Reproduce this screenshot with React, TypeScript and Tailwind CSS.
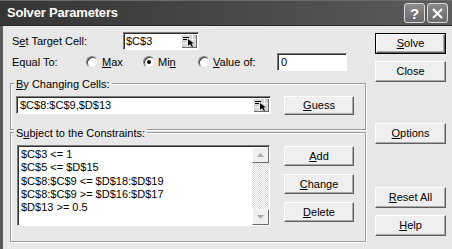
import type { ReactNode } from "react";

const font = "font-['Liberation_Sans',Arial,sans-serif]";

function Btn({
  children,
  className = "",
  isDefault = false,
}: {
  children: ReactNode;
  className?: string;
  isDefault?: boolean;
}) {
  return (
    <div className={`${isDefault ? "border border-black" : ""} ${className}`}>
      <div className="h-full w-full flex items-center justify-center text-[11px] text-black bg-[#efefef] border border-t-white border-l-white border-r-[#5f5f5f] border-b-[#5f5f5f] shadow-[inset_-1px_-1px_0_#a9a9a9]">
        {children}
      </div>
    </div>
  );
}

function RefIcon() {
  return (
    <svg width="15" height="13" viewBox="0 0 15 13" className="shrink-0">
      <rect x="0" y="0" width="15" height="13" fill="#d2d2d2" />
      <path d="M0 4.5H15M0 8.5H15M5.5 0V13M10.5 0V13" stroke="#f2f2f2" strokeWidth="1" />
      <path d="M1 2.5H7M1 4.5H5" stroke="#000" strokeWidth="1" />
      <path d="M6 4 L6 11 L8 9 L10 12 L11 11.5 L9.5 8.5 L12 8.5 Z" fill="#000" />
      <path d="M0 12.5H15M14.5 0V13" stroke="#6a6a6a" strokeWidth="1" />
    </svg>
  );
}

function Radio({ checked = false }: { checked?: boolean }) {
  return (
    <span className="w-[12px] h-[12px] rounded-full bg-white border border-t-[#7d7d7d] border-l-[#7d7d7d] border-r-[#e4e4e4] border-b-[#e4e4e4] shadow-[inset_1px_1px_0_#3f3f3f] flex items-center justify-center shrink-0">
      {checked && <span className="w-[4px] h-[4px] rounded-full bg-black" />}
    </span>
  );
}

const sunken =
  "bg-white border border-t-[#7d7d7d] border-l-[#7d7d7d] border-r-white border-b-white shadow-[inset_1px_1px_0_#2e2e2e]";

const etched =
  "border border-[#9b9b9b] shadow-[inset_1px_1px_0_#fff,1px_1px_0_#fff]";

const constraints = [
  "$C$3 <= 1",
  "$C$5 <= $D$15",
  "$C$8:$C$9 <= $D$18:$D$19",
  "$C$8:$C$9 >= $D$16:$D$17",
  "$D$13 >= 0.5",
];

export default function App() {
  return (
    <div className={`w-[452px] h-[249px] overflow-hidden bg-[#e8e8e8] flex flex-col ${font}`}>
      {/* title bar */}
      <div className="h-[26px] shrink-0 flex items-center justify-between bg-gradient-to-r from-[#353535] via-[#474747] to-[#5c5c5c] shadow-[inset_0_1px_0_#6a6a6a,inset_0_-1px_0_#2a2a2a]">
        <span className="pl-[7px] text-[13px] font-bold text-white tracking-[-0.2px]">
          Solver Parameters
        </span>
        <div className="flex gap-[2px] pr-[4px]">
          <div className="w-[21px] h-[20px] rounded-[3px] border border-[#dcdcdc] bg-gradient-to-b from-[#8c8c8c] to-[#6a6a6a] flex items-center justify-center text-white font-bold text-[15px] leading-none">
            ?
          </div>
          <div className="w-[21px] h-[20px] rounded-[3px] border border-[#dcdcdc] bg-gradient-to-b from-[#8a8a8a] to-[#6a6a6a] flex items-center justify-center">
            <svg width="13" height="13" viewBox="0 0 13 13">
              <path d="M2 2L11 11M11 2L2 11" stroke="#fff" strokeWidth="2.2" />
            </svg>
          </div>
        </div>
      </div>

      {/* body */}
      <div className="flex-1 flex border-l-[3px] border-[#5a5a5a] text-[11px] text-black">
        {/* left column */}
        <div className="w-[362px] pl-[7px] pt-[6px] flex flex-col">
          <div className="h-[18px] flex items-center">
            <span className="w-[113px] pl-[2px]">
              S<span className="underline">e</span>t Target Cell:
            </span>
            <div className={`w-[76px] h-[18px] ${sunken} flex items-center justify-between pl-[2px] pr-[1px]`}>
              <span>$C$3</span>
              <RefIcon />
            </div>
          </div>

          <div className="h-[18px] mt-[3px] flex items-center">
            <span className="w-[76px] pl-[2px]">Equal To:</span>
            <div className="w-[57px] flex items-center gap-[4px]">
              <Radio />
              <span>
                <span className="underline">M</span>ax
              </span>
            </div>
            <div className="w-[55px] flex items-center gap-[3px]">
              <Radio checked />
              <span>
                Mi<span className="underline">n</span>
              </span>
            </div>
            <div className="w-[79px] flex items-center gap-[3px]">
              <Radio />
              <span>
                <span className="underline">V</span>alue of:
              </span>
            </div>
            <div className={`w-[70px] h-[18px] ${sunken} flex items-center pl-[3px]`}>0</div>
          </div>

          {/* By Changing Cells */}
          <div className={`relative mt-[12px] h-[47px] w-[356px] ${etched} pl-[5px] pt-[12px] flex items-start`}>
            <span className="absolute left-[3px] top-[-8px] px-[2px] bg-[#e8e8e8]">
              <span className="underline">B</span>y Changing Cells:
            </span>
            <div className={`w-[255px] h-[18px] ${sunken} flex items-center justify-between pl-[3px] pr-[1px]`}>
              <span>$C$8:$C$9,$D$13</span>
              <RefIcon />
            </div>
            <Btn className="ml-[13px] w-[70px] h-[19px]">
              <span>
                <span className="underline">G</span>uess
              </span>
            </Btn>
          </div>

          {/* Subject to the Constraints */}
          <div className={`relative mt-[2px] h-[110px] w-[356px] ${etched} pl-[6px] pt-[12px] flex items-start`}>
            <span className="absolute left-[3px] top-[-8px] px-[2px] bg-[#e8e8e8]">
              S<span className="underline">u</span>bject to the Constraints:
            </span>
            <div className={`w-[253px] h-[81px] ${sunken} flex`}>
              <div className="flex-1 pl-[3px] pt-[2px] leading-[13.3px] whitespace-pre">
                {constraints.map((c) => (
                  <div key={c}>{c}</div>
                ))}
              </div>
              <div className="w-[17px] flex flex-col bg-[repeating-conic-gradient(#ffffff_0_25%,#d9d9d9_0_50%)] bg-[length:2px_2px] mt-[1px] mr-[0px]">
                <div className="h-[16px] bg-[#efefef] border border-t-white border-l-white border-r-[#6b6b6b] border-b-[#6b6b6b] flex items-center justify-center">
                  <svg width="7" height="4" viewBox="0 0 7 4">
                    <path d="M3.5 0L7 4H0Z" fill="#a8a8a8" />
                  </svg>
                </div>
                <div className="flex-1" />
                <div className="h-[16px] bg-[#efefef] border border-t-white border-l-white border-r-[#6b6b6b] border-b-[#6b6b6b] flex items-center justify-center">
                  <svg width="7" height="4" viewBox="0 0 7 4">
                    <path d="M0 0H7L3.5 4Z" fill="#a8a8a8" />
                  </svg>
                </div>
              </div>
            </div>
            <div className="ml-[14px] mt-[1px] flex flex-col gap-[8px]">
              <Btn className="w-[70px] h-[20px]">
                <span>
                  <span className="underline">A</span>dd
                </span>
              </Btn>
              <Btn className="w-[70px] h-[20px]">
                <span>
                  <span className="underline">C</span>hange
                </span>
              </Btn>
              <Btn className="w-[70px] h-[20px]">
                <span>
                  <span className="underline">D</span>elete
                </span>
              </Btn>
            </div>
          </div>
        </div>

        {/* right column */}
        <div className="ml-[10px] pt-[7px] w-[71px] flex flex-col">
          <Btn isDefault className="h-[21px]">
            <span>
              <span className="underline">S</span>olve
            </span>
          </Btn>
          <Btn className="h-[21px] mt-[7px]">Close</Btn>
          <Btn className="h-[21px] mt-[41px]">
            <span>
              <span className="underline">O</span>ptions
            </span>
          </Btn>
          <Btn className="h-[21px] mt-[43px]">
            <span>
              <span className="underline">R</span>eset All
            </span>
          </Btn>
          <Btn className="h-[21px] mt-[7px]">
            <span>
              <span className="underline">H</span>elp
            </span>
          </Btn>
        </div>
      </div>
    </div>
  );
}
